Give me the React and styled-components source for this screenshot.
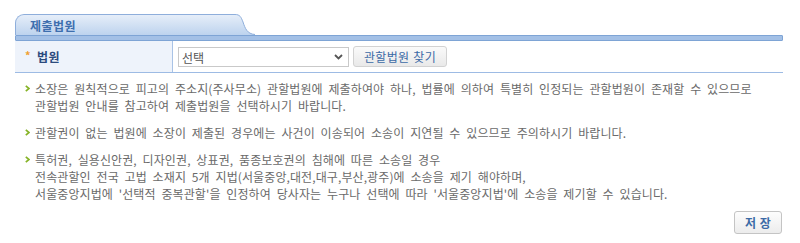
import React from "react";
import styled, { createGlobalStyle } from "styled-components";

const Global = createGlobalStyle`
  html, body { margin: 0; padding: 0; background: #fff; }
  body { font-family: "Noto Sans CJK KR", "Noto Sans", sans-serif; font-size: 12px; }
`;

const Page = styled.div`
  padding: 13px 17px 0 15px;
  display: flex;
  flex-direction: column;
`;

const Header = styled.div`
  display: flex;
  align-items: flex-end;
  height: 22px;
`;

const TabBody = styled.div`
  width: 216px;
  height: 21px;
  box-sizing: border-box;
  border: 1px solid #8eaedb;
  border-right: none;
  border-bottom: none;
  border-top-left-radius: 9px;
  background: linear-gradient(#e6eef9, #bdd3ee);
  display: flex;
  align-items: center;
  padding-left: 14px;
  padding-top: 1px;
  font-weight: 700;
  font-size: 12px;
  letter-spacing: 0.5px;
  color: #3d6eae;
`;

const TabCurve = styled.svg`
  display: block;
  width: 24px;
  height: 21px;
`;

const Bar = styled.div`
  height: 4px;
  border: 1px solid #7ea4d5;
  border-radius: 1px;
  background: #a3c0e6;
`;

const FormRow = styled.div`
  display: flex;
  height: 31px;
  border-bottom: 1px solid #9dbbe4;
`;

const LabelCell = styled.div`
  background: #eef3fb;
  border-right: 1px solid #a9c3e6;
  display: flex;
  align-items: center;
  padding-left: 10px;
  box-sizing: border-box;
  width: 158px;
  font-weight: 700;
  color: #2c4b7e;
  font-size: 12px;
  letter-spacing: 0.5px;
`;

const Star = styled.span`
  color: #f0a030;
  font-size: 11px;
  width: 12px;
  margin-top: -3px;
`;

const FieldCell = styled.div`
  display: flex;
  align-items: center;
  padding-left: 5px;
  gap: 4px;
  padding-top: 1px;
`;

const SelectWrap = styled.div`
  position: relative;
  width: 171px;
  height: 20px;
`;

const Select = styled.select`
  appearance: none;
  -webkit-appearance: none;
  width: 100%;
  height: 100%;
  box-sizing: border-box;
  border: 1px solid #c9c9c9;
  background: #fff;
  font-family: "Noto Sans CJK KR", sans-serif;
  font-size: 12px;
  color: #555;
  padding: 0 0 0 3px;
  margin: 0;
  outline: none;
`;

const Chevron = styled.svg`
  position: absolute;
  right: 6px;
  top: 7px;
  width: 9px;
  height: 6px;
  pointer-events: none;
`;

const FindButton = styled.button`
  height: 21px;
  width: 94px;
  box-sizing: border-box;
  border: 1px solid #d2d2d2;
  border-radius: 3px;
  background: linear-gradient(#fafafa, #e9e9e9);
  color: #3b6aa6;
  font-family: "Noto Sans CJK KR", sans-serif;
  font-size: 12px;
  letter-spacing: 0.3px;
  word-spacing: 1px;
  padding: 0;
  margin-top: -2px;
`;

const Notes = styled.div`
  display: flex;
  flex-direction: column;
  gap: 10px;
  padding: 7px 0 0 10px;
`;

const Note = styled.div`
  display: flex;
  line-height: 17px;
  color: #6a6a6a;
  font-size: 12px;
  letter-spacing: 0.1px;
  word-spacing: 3px;
  white-space: nowrap;
`;

const BulletBox = styled.span`
  width: 10px;
  flex: none;
  display: flex;
  padding-top: 5px;
  box-sizing: border-box;
`;

const Footer = styled.div`
  display: flex;
  justify-content: flex-end;
  padding: 9px 1px 0 0;
`;

const SaveButton = styled.button`
  width: 48px;
  height: 23px;
  box-sizing: border-box;
  border: 1px solid #c4c4c4;
  border-radius: 3px;
  background: linear-gradient(#fdfdfd, #ececec);
  color: #3b6aa6;
  font-family: "Noto Sans CJK KR", sans-serif;
  font-size: 12px;
  font-weight: 700;
  word-spacing: 1px;
  padding: 0;
`;

const Bullet = () => (
  <BulletBox>
    <svg width="5" height="7" viewBox="0 0 5 7">
      <path d="M0.8 0.8 L4 3.5 L0.8 6.2" fill="none" stroke="#86b327" strokeWidth="1.7" />
    </svg>
  </BulletBox>
);

export default function App() {
  return (
    <>
      <Global />
      <Page>
        <Header>
          <TabBody>제출법원</TabBody>
          <TabCurve viewBox="0 0 24 21">
            <defs>
              <linearGradient id="tg" x1="0" y1="0" x2="0" y2="1">
                <stop offset="0" stopColor="#e6eef9" />
                <stop offset="1" stopColor="#bdd3ee" />
              </linearGradient>
            </defs>
            <path d="M0 0.5 H4 C9 0.5 10 3 12 8 C14 14 16 20 24 20.5 V21 H0 Z" fill="url(#tg)" />
            <path d="M0 0.5 H4 C9 0.5 10 3 12 8 C14 14 16 20 24 20.5" fill="none" stroke="#8eaedb" strokeWidth="1" />
          </TabCurve>
        </Header>
        <Bar />
        <FormRow>
          <LabelCell>
            <Star>*</Star>법원
          </LabelCell>
          <FieldCell>
            <SelectWrap>
              <Select defaultValue="">
                <option value="">선택</option>
              </Select>
              <Chevron viewBox="0 0 9 6">
                <path d="M1 1 L4.5 4.5 L8 1" fill="none" stroke="#555" strokeWidth="1.8" />
              </Chevron>
            </SelectWrap>
            <FindButton>관할법원 찾기</FindButton>
          </FieldCell>
        </FormRow>
        <Notes>
          <Note>
            <Bullet />
            <span>
              소장은 원칙적으로 피고의 주소지(주사무소) 관할법원에 제출하여야 하나, 법률에 의하여 특별히 인정되는 관할법원이 존재할 수 있으므로
              <br />
              관할법원 안내를 참고하여 제출법원을 선택하시기 바랍니다.
            </span>
          </Note>
          <Note>
            <Bullet />
            <span>관할권이 없는 법원에 소장이 제출된 경우에는 사건이 이송되어 소송이 지연될 수 있으므로 주의하시기 바랍니다.</span>
          </Note>
          <Note>
            <Bullet />
            <span>
              특허권, 실용신안권, 디자인권, 상표권, 품종보호권의 침해에 따른 소송일 경우
              <br />
              전속관할인 전국 고법 소재지 5개 지법(서울중앙,대전,대구,부산,광주)에 소송을 제기 해야하며,
              <br />
              서울중앙지법에 '선택적 중복관할'을 인정하여 당사자는 누구나 선택에 따라 '서울중앙지법'에 소송을 제기할 수 있습니다.
            </span>
          </Note>
        </Notes>
        <Footer>
          <SaveButton>저 장</SaveButton>
        </Footer>
      </Page>
    </>
  );
}
